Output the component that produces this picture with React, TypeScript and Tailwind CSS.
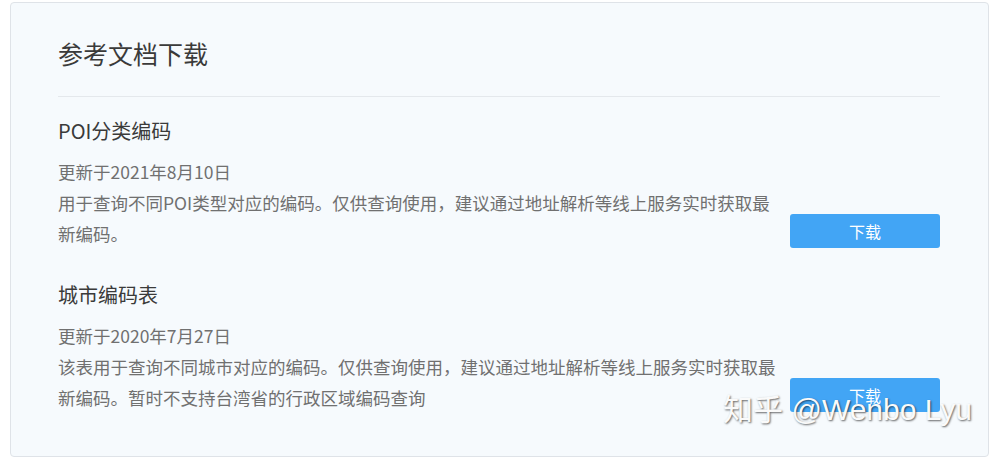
import React from "react";

const items = [
  {
    title: "POI分类编码",
    date: "更新于2021年8月10日",
    desc: "用于查询不同POI类型对应的编码。仅供查询使用，建议通过地址解析等线上服务实时获取最新编码。",
  },
  {
    title: "城市编码表",
    date: "更新于2020年7月27日",
    desc: "该表用于查询不同城市对应的编码。仅供查询使用，建议通过地址解析等线上服务实时获取最新编码。暂时不支持台湾省的行政区域编码查询",
  },
];

export default function App() {
  return (
    <div
      className="relative w-[999px] h-[460px] bg-white pt-[2px] pl-[10px] pr-[10px]"
      style={{ fontFamily: '"Noto Sans CJK SC", "Noto Sans", sans-serif' }}
    >
      <div className="h-[455px] rounded-[4px] border border-[#dfe3e8] bg-[#f6fafd] pl-[47px] pr-[48px] pt-[35px]">
        <h1 className="text-[25px] leading-[30px] text-[#3a3a3a] font-normal">参考文档下载</h1>
        <div className="mt-[28px] h-px bg-[#e4e8ec]" />
        <div className="mt-[19px] flex flex-col gap-[31px]">
          {items.map((it) => (
            <div key={it.title} className="flex flex-col">
              <div className="text-[20px] leading-[30px] text-[#3a3a3a]">{it.title}</div>
              <div className="mt-[10px] flex items-end">
                <div className="w-[724px] text-[17.5px] leading-[31px] text-[#707070]">
                  <div>{it.date}</div>
                  <div>{it.desc}</div>
                </div>
                <button className="ml-auto mb-px w-[150px] h-[34px] rounded-[3px] bg-[#42a5f5] text-white text-[16px] leading-[34px]">
                  下载
                </button>
              </div>
            </div>
          ))}
        </div>
      </div>
      <div
        className="absolute right-[27px] top-[392px] text-[30px] leading-[36px] text-[#fafafa] whitespace-nowrap [text-shadow:1px_1px_2px_rgba(0,0,0,0.6)]"
        style={{ fontFamily: '"Liberation Sans", "Noto Sans CJK SC", sans-serif' }}
      >
        知乎 @Wenbo Lyu
      </div>
    </div>
  );
}
